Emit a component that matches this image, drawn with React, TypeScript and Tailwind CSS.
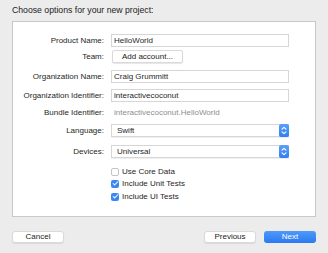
import { Check } from 'lucide-react';

const font = { fontFamily: '"Liberation Sans", Arial, sans-serif' };

function Label({ text }: { text: string }) {
  return <div className="w-[92px] shrink-0 text-right pr-px text-[8px] text-[#262626]">{text}</div>;
}

function TextField({ value }: { value: string }) {
  return (
    <div className="w-[178px] h-[13px] border border-[#d6d6d6] bg-white flex items-center pl-[2px] text-[8px] text-[#1f1f1f]">
      {value}
    </div>
  );
}

function Stepper() {
  return (
    <div className="w-[10px] h-[13px] -my-px -mr-px rounded-[2px] bg-gradient-to-b from-[#5aa0fa] to-[#2f7ef2] flex items-center justify-center">
      <svg width="6" height="9" viewBox="0 0 6 9" fill="none" stroke="white" strokeWidth="1.1" strokeLinecap="round" strokeLinejoin="round">
        <path d="M1 3.2 L3 1.3 L5 3.2" />
        <path d="M1 5.8 L3 7.7 L5 5.8" />
      </svg>
    </div>
  );
}

function Select({ value }: { value: string }) {
  return (
    <div className="w-[178px] h-[13px] border border-[#d6d6d6] bg-white flex items-center justify-between pl-[5px] text-[8px] text-[#1f1f1f] shadow-[0_1px_0_rgba(0,0,0,0.06)]">
      <span>{value}</span>
      <Stepper />
    </div>
  );
}

function CheckRow({ label, checked, className }: { label: string; checked: boolean; className?: string }) {
  return (
    <div className={`flex items-center pl-[98px] ${className ?? ''}`}>
      {checked ? (
        <div className="w-[8px] h-[8px] rounded-[2px] bg-[#3a88f5] flex items-center justify-center">
          <Check size={7} strokeWidth={3.5} className="text-white" />
        </div>
      ) : (
        <div className="w-[8px] h-[8px] rounded-[2px] bg-white border border-[#c4c4c4]" />
      )}
      <span className="ml-[3px] text-[8px] text-[#262626]">{label}</span>
    </div>
  );
}

function Button({ label, primary, className }: { label: string; primary?: boolean; className?: string }) {
  return primary ? (
    <div className={`w-[52px] h-[12px] rounded-[3px] bg-gradient-to-b from-[#4f99fa] to-[#2a79f0] flex items-center justify-center text-[8px] text-white ${className ?? ''}`}>
      {label}
    </div>
  ) : (
    <div className={`w-[52px] h-[12px] rounded-[3px] bg-white border border-[#d9d9d9] shadow-[0_1px_1px_rgba(0,0,0,0.08)] flex items-center justify-center text-[8px] text-[#222] ${className ?? ''}`}>
      {label}
    </div>
  );
}

export default function App() {
  return (
    <div className="w-[328px] h-[253px] bg-[#ececec] flex flex-col" style={font}>
      <div className="h-[21px] pl-[12px] pt-[5px] text-[8.7px] text-[#222] leading-[11px]">
        Choose options for your new project:
      </div>

      <div className="mx-[12px] h-[196px] bg-white border border-[#c8c8c8] flex flex-col pt-[12px]">
        <div className="flex items-center gap-[6px] h-[13px]">
          <Label text="Product Name:" />
          <TextField value="HelloWorld" />
        </div>
        <div className="flex items-center gap-[6px] h-[13px] mt-[3px]">
          <Label text="Team:" />
          <div className="ml-[1px] w-[71px] h-[13px] bg-white border border-[#dadada] rounded-[2px] shadow-[0_1px_1px_rgba(0,0,0,0.1)] flex items-center justify-center text-[8px] text-[#222]">
            Add account...
          </div>
        </div>
        <div className="flex items-center gap-[6px] h-[13px] mt-[7px]">
          <Label text="Organization Name:" />
          <TextField value="Craig Grummitt" />
        </div>
        <div className="flex items-center gap-[6px] h-[13px] mt-[6px]">
          <Label text="Organization Identifier:" />
          <TextField value="interactivecoconut" />
        </div>
        <div className="flex items-center gap-[6px] h-[12px] mt-[5px]">
          <Label text="Bundle Identifier:" />
          <div className="pl-[3px] text-[8px] text-[#8e8e8e]">interactivecoconut.HelloWorld</div>
        </div>
        <div className="flex items-center gap-[6px] h-[13px] mt-[5px]">
          <Label text="Language:" />
          <Select value="Swift" />
        </div>
        <div className="flex items-center gap-[6px] h-[13px] mt-[8px]">
          <Label text="Devices:" />
          <Select value="Universal" />
        </div>
        <CheckRow label="Use Core Data" checked={false} className="mt-[9px] h-[9px]" />
        <CheckRow label="Include Unit Tests" checked className="mt-[3px] h-[9px]" />
        <CheckRow label="Include UI Tests" checked className="mt-[4px] h-[9px]" />
      </div>

      <div className="flex items-center px-[12px] mt-[14px]">
        <Button label="Cancel" />
        <div className="flex-1" />
        <Button label="Previous" />
        <Button label="Next" primary className="ml-[8px]" />
      </div>
    </div>
  );
}
